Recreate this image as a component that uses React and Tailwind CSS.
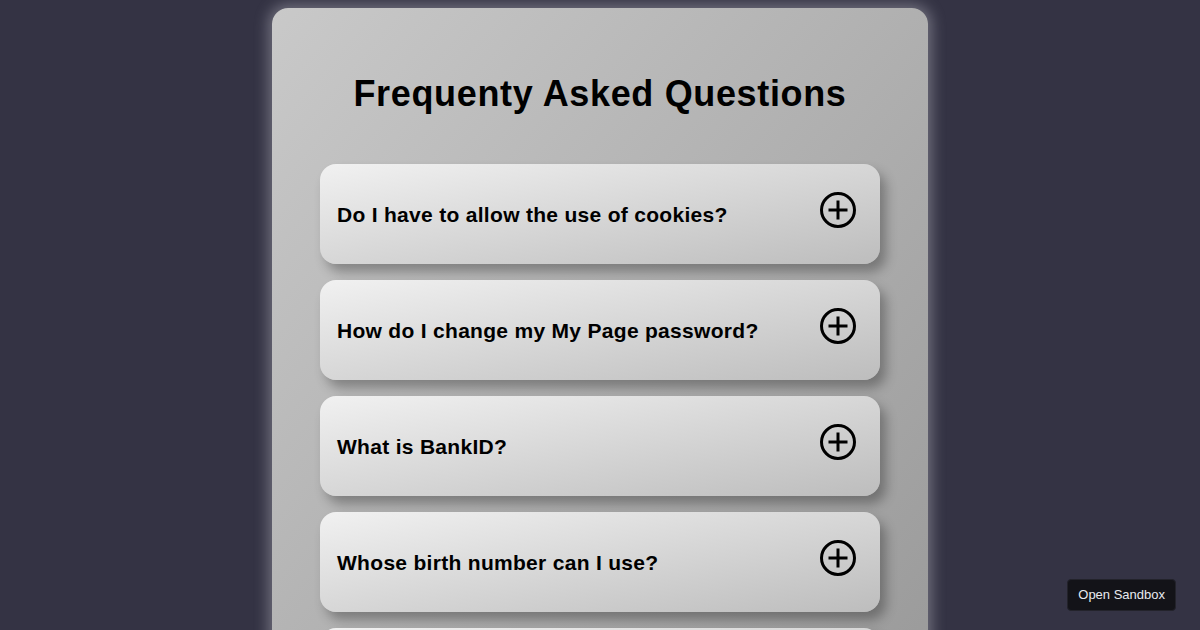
import { useState } from 'react'

const FAQS = [
  'Do I have to allow the use of cookies?',
  'How do I change my My Page password?',
  'What is BankID?',
  'Whose birth number can I use?',
  'What is a birth number?',
]

function PlusCircle() {
  return (
    <svg width="38" height="38" viewBox="0 0 38 38" fill="none" stroke="#000" strokeWidth="3">
      <circle cx="19" cy="19" r="16.5" />
      <path d="M19 9.5v19M9.5 19h19" />
    </svg>
  )
}

function FaqItem({ question }) {
  const [open, setOpen] = useState(false)
  return (
    <div
      className="rounded-2xl bg-gradient-to-br from-[#f1f1f1] to-[#bdbdbd] shadow-[6px_8px_12px_rgba(0,0,0,0.3)] cursor-pointer"
      onClick={() => setOpen(!open)}
    >
      <div className="h-[100px] flex items-center justify-between pl-[17px] pr-[23px]">
        <span className="text-[21px] tracking-[0.3px] font-bold text-black pt-[1px]">{question}</span>
        <span className="mb-[9px]">
          <PlusCircle />
        </span>
      </div>
    </div>
  )
}

export default function App() {
  return (
    <div
      className="min-h-screen bg-[#343344] flex justify-center pt-2 pb-10"
      style={{ fontFamily: '"Liberation Sans", Arial, sans-serif' }}
    >
      <div className="w-[656px] rounded-2xl bg-gradient-to-br from-[#c9c9c9] to-[#979797] shadow-[0_0_14px_4px_rgba(220,220,230,0.35)] px-12 pb-12">
        <h1 className="text-[36px] tracking-[0.65px] font-bold text-black text-center mt-[65px] mb-[50px] leading-[41px]">
          Frequenty Asked Questions
        </h1>
        <div className="flex flex-col gap-4">
          {FAQS.map((q) => (
            <FaqItem key={q} question={q} />
          ))}
        </div>
      </div>
      <button className="fixed right-6 bottom-[19px] bg-[#131318] text-[#e8eaf0] text-[13px] rounded px-[10px] h-8 border border-[#23232b]">
        Open Sandbox
      </button>
    </div>
  )
}
